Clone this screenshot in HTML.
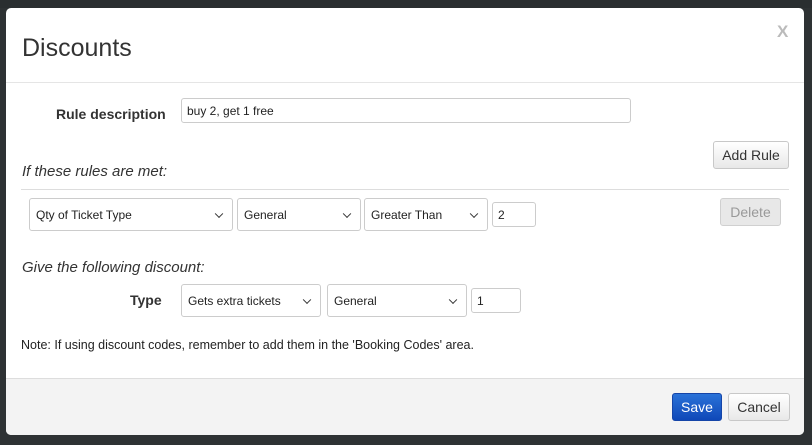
<!DOCTYPE html>
<html><head><style>
*{box-sizing:border-box}
body{margin:0;width:812px;height:445px;background:#2e3234;font-family:"Liberation Sans",sans-serif;position:relative;overflow:hidden;color:#333}
.a{position:absolute}
.modal{left:6px;top:8px;width:798px;height:427px;background:#fff;border-radius:5px;overflow:hidden}
.sel{position:absolute;border:1px solid #ccc;border-radius:3px;background:#fff;font-size:12px;padding-left:6px;display:flex;align-items:center;color:#222}
.sel:after{content:"";position:absolute;right:10px;top:50%;width:5px;height:5px;border-right:1.5px solid #333;border-bottom:1.5px solid #333;transform:translateY(-70%) rotate(45deg)}
.inp{position:absolute;border:1px solid #ccc;border-radius:3px;background:#fff;font-size:12px;padding-left:5px;display:flex;align-items:center;color:#222}
.btn{position:absolute;border:1px solid #c8c8c8;border-radius:3px;background:linear-gradient(#fff,#e8e8e8);font-size:14px;display:flex;align-items:center;justify-content:center;color:#333}
</style></head><body>
<div class="a" style="left:0;top:0;width:812px;height:8px;background:#2a2e30"></div>
<div class="a modal">
  <div class="a" style="left:16px;top:26px;font-size:25px;color:#333">Discounts</div>
  <div class="a" style="left:771px;top:14px;font-size:17px;font-weight:bold;color:#bbb">X</div>
  <div class="a" style="left:0;top:74px;width:798px;height:1px;background:#e5e5e5"></div>
  <div class="a" style="left:50px;top:98px;font-size:14px;font-weight:bold;color:#333">Rule description</div>
  <div class="inp" style="left:175px;top:90px;width:450px;height:25px">buy 2, get 1 free</div>
  <div class="btn" style="left:707px;top:133px;width:76px;height:28px">Add Rule</div>
  <div class="a" style="left:16px;top:155px;font-size:15px;font-style:italic;color:#333">If these rules are met:</div>
  <div class="a" style="left:15px;top:181px;width:768px;height:1px;background:#ddd"></div>
  <div class="sel" style="left:23px;top:190px;width:204px;height:33px">Qty of Ticket Type</div>
  <div class="sel" style="left:231px;top:190px;width:124px;height:33px">General</div>
  <div class="sel" style="left:358px;top:190px;width:124px;height:33px">Greater Than</div>
  <div class="inp" style="left:486px;top:194px;width:44px;height:25px">2</div>
  <div class="btn" style="left:714px;top:190px;width:61px;height:28px;color:#999;background:#e8e8e8;border-color:#d0d0d0">Delete</div>
  <div class="a" style="left:16px;top:251px;font-size:15px;font-style:italic;color:#333">Give the following discount:</div>
  <div class="a" style="left:124px;top:284px;font-size:14px;font-weight:bold">Type</div>
  <div class="sel" style="left:175px;top:276px;width:140px;height:33px">Gets extra tickets</div>
  <div class="sel" style="left:321px;top:276px;width:140px;height:33px">General</div>
  <div class="inp" style="left:465px;top:280px;width:50px;height:25px">1</div>
  <div class="a" style="left:15px;top:330px;font-size:12.5px;color:#222">Note: If using discount codes, remember to add them in the 'Booking Codes' area.</div>
  <div class="a" style="left:0;top:370px;width:798px;height:57px;background:#f3f3f3;border-top:1px solid #ddd"></div>
  <div class="btn" style="left:666px;top:385px;width:50px;height:28px;background:linear-gradient(#2a72d8,#0f48b8);border-color:#1545a8;color:#fff">Save</div>
  <div class="btn" style="left:722px;top:385px;width:62px;height:28px">Cancel</div>
</div>
</body></html>
